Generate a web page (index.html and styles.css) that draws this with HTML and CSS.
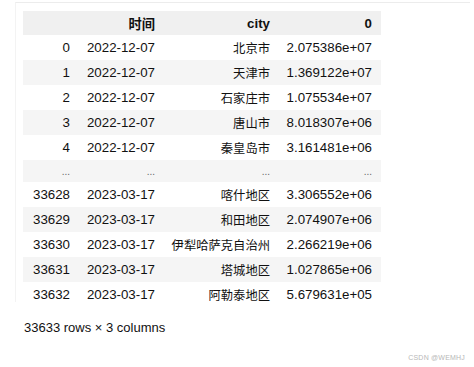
FILE: index.html
```html
<!DOCTYPE html>
<html lang="en">
<head>
    <meta charset="UTF-8">
    <title>DataFrame</title>
    <link rel="stylesheet" href="styles.css">
</head>
<body>

    <!-- Output cell -->
    <div class="output-area">
        <table class="dataframe">
            <thead>
                <tr>
                    <th class="col-idx"></th>
                    <th class="col-date">时间</th>
                    <th class="col-city">city</th>
                    <th class="col-val">0</th>
                </tr>
            </thead>
            <tbody>
                <tr><td>0</td><td>2022-12-07</td><td class="cn">北京市</td><td>2.075386e+07</td></tr>
                <tr><td>1</td><td>2022-12-07</td><td class="cn">天津市</td><td>1.369122e+07</td></tr>
                <tr><td>2</td><td>2022-12-07</td><td class="cn">石家庄市</td><td>1.075534e+07</td></tr>
                <tr><td>3</td><td>2022-12-07</td><td class="cn">唐山市</td><td>8.018307e+06</td></tr>
                <tr><td>4</td><td>2022-12-07</td><td class="cn">秦皇岛市</td><td>3.161481e+06</td></tr>
                <tr class="dots"><td>...</td><td>...</td><td>...</td><td>...</td></tr>
                <tr><td>33628</td><td>2023-03-17</td><td class="cn">喀什地区</td><td>3.306552e+06</td></tr>
                <tr><td>33629</td><td>2023-03-17</td><td class="cn">和田地区</td><td>2.074907e+06</td></tr>
                <tr><td>33630</td><td>2023-03-17</td><td class="cn">伊犁哈萨克自治州</td><td>2.266219e+06</td></tr>
                <tr><td>33631</td><td>2023-03-17</td><td class="cn">塔城地区</td><td>1.027865e+06</td></tr>
                <tr><td>33632</td><td>2023-03-17</td><td class="cn">阿勒泰地区</td><td>5.679631e+05</td></tr>
            </tbody>
        </table>
        <p class="shape">33633 rows × 3 columns</p>
    </div>

    <div class="watermark">CSDN @WEMHJ</div>

</body>
</html>
```

FILE: styles.css
```css
* {
    margin: 0;
    padding: 0;
    box-sizing: border-box;
}

body {
    background-color: #ffffff;
    color: #111111;
    font-family: "Liberation Sans", Arial, "Noto Sans CJK SC", sans-serif;
    font-size: 13.3px;
    height: 367px;
    position: relative;
    overflow: hidden;
}

/* Output cell */
.output-area {
    margin: 2px 4px 0 15px;
    border-top: 1px solid #ececec;
    border-left: 1px solid #f3f3f3;
    padding: 8px 0 0 7px;
    height: 300px;
}

.dataframe {
    border-collapse: collapse;
    table-layout: fixed;
    width: 358px;
}

.col-idx { width: 56px; }
.col-date { width: 85px; }
.col-city { width: 115px; }
.col-val { width: 102px; }

.dataframe th,
.dataframe td {
    text-align: right;
    padding: 0 9px 0 0;
    height: 25px;
    vertical-align: middle;
    white-space: nowrap;
}

.dataframe thead tr {
    background-color: #f0f0f0;
}

.dataframe th {
    font-weight: bold;
    height: 24px;
}

.dataframe tbody tr:nth-child(even) {
    background-color: #f5f5f5;
}

.dataframe td.cn {
    font-size: 12.3px;
}

.dataframe tr.dots td {
    height: 22px;
    font-size: 10px;
    color: #666;
}

.shape {
    margin-top: 13px;
    padding-left: 1px;
    font-size: 13px;
}

/* Watermark */
.watermark {
    position: absolute;
    right: 9px;
    bottom: 6px;
    font-size: 7px;
    color: #b8b8b8;
    letter-spacing: 0.2px;
}
```
